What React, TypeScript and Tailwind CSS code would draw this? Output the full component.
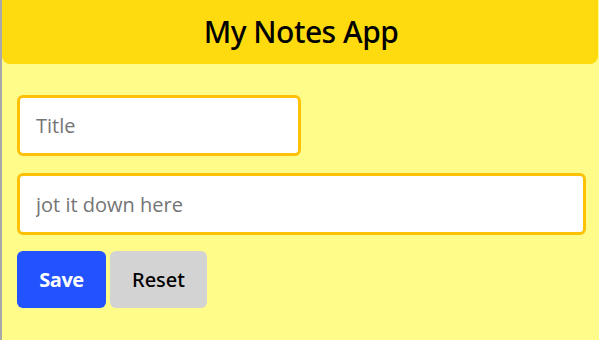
import React from "react";

export default function App() {
  return (
    <div className="flex h-[340px] w-[599px] overflow-hidden bg-[#fffc8a]" style={{ fontFamily: '"Open Sans", sans-serif' }}>
      <div className="w-[2px] shrink-0 bg-[#a8a8a8]" />
      <div className="flex flex-1 flex-col">
        <header className="mr-[1px] flex h-[64px] items-center justify-center rounded-b-lg bg-[#fddb0f]">
          <h1 className="ml-[2px] text-[30px] font-medium leading-none tracking-[-0.5px] text-black" style={{ fontFamily: '"Noto Sans", sans-serif' }}>My Notes App</h1>
        </header>
        <div className="flex flex-col pl-[15px] pt-[31px]">
          <input
            placeholder="Title"
            className="h-[61px] w-[284px] rounded-md border-[3px] border-[#ffc107] bg-white px-[16px] text-[20px] text-black outline-none placeholder:text-[#757575]"
          />
          <input
            placeholder="jot it down here"
            className="mt-[17px] h-[62px] w-[569px] rounded-md border-[3px] border-[#ffc107] bg-white px-[16px] text-[20px] text-black outline-none placeholder:text-[#757575]"
          />
          <div className="mt-[16px] flex gap-[4px]">
            <button className="h-[57px] w-[89px] rounded-md bg-[#2253ff] text-[20px] font-bold tracking-[-0.5px] text-white">Save</button>
            <button className="h-[57px] w-[97px] rounded-md bg-[#d3d3d3] text-[20px] font-medium text-black" style={{ fontFamily: '"Noto Sans", sans-serif' }}>Reset</button>
          </div>
        </div>
      </div>
    </div>
  );
}
